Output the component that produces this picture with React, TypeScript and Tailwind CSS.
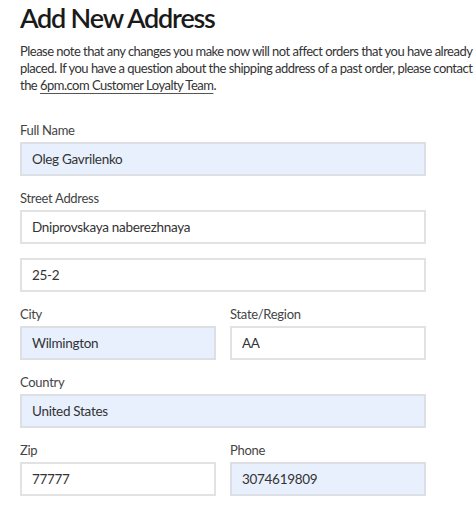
import React from 'react';

interface Field {
  label?: string;
  value: string;
  filled?: boolean;
}

const font = { fontFamily: 'Lato, "Open Sans", sans-serif' };

const Input: React.FC<Field> = ({ label, value, filled }) => (
  <div className="flex flex-col gap-[4px]">
    {label && (
      <label className="text-[13px] leading-[16px] tracking-[-0.3px] text-[#444]">{label}</label>
    )}
    <input
      readOnly
      value={value}
      className={`h-[34px] w-full border-2 px-[10px] text-[13.5px] tracking-[-0.3px] text-[#333] outline-none ${
        filled ? 'bg-[#e8f0fe] border-[#dcdfe4]' : 'bg-white border-[#e2e2e2]'
      }`}
      style={font}
    />
  </div>
);

export default function App() {
  return (
    <div className="min-h-screen overflow-hidden bg-white pl-[20px]" style={font}>
      <h1 className="text-[27px] leading-[36px] font-semibold tracking-[-1.2px] text-[#1a1a1a]">
        Add New Address
      </h1>
      <p className="mt-[7px] whitespace-nowrap text-[13px] leading-[17px] tracking-[-0.52px] text-[#333]">
        <span className="block">Please note that any changes you make now will not affect orders that you have already</span>
        <span className="block">placed. If you have a question about the shipping address of a past order, please contact</span>
        <span className="block">
          the{' '}
          <a href="#" className="underline decoration-[#555] underline-offset-[3px]">
            6pm.com Customer Loyalty Team
          </a>
          .
        </span>
      </p>

      <form className="mt-[28px] flex w-[406px] flex-col gap-[14px]">
        <Input label="Full Name" value="Oleg Gavrilenko" filled />
        <Input label="Street Address" value="Dniprovskaya naberezhnaya" />
        <Input value="25-2" />
        <div className="grid grid-cols-2 gap-[14px]">
          <Input label="City" value="Wilmington" filled />
          <Input label="State/Region" value="AA" />
        </div>
        <Input label="Country" value="United States" filled />
        <div className="grid grid-cols-2 gap-[14px]">
          <Input label="Zip" value="77777" />
          <Input label="Phone" value="3074619809" filled />
        </div>
      </form>
    </div>
  );
}
